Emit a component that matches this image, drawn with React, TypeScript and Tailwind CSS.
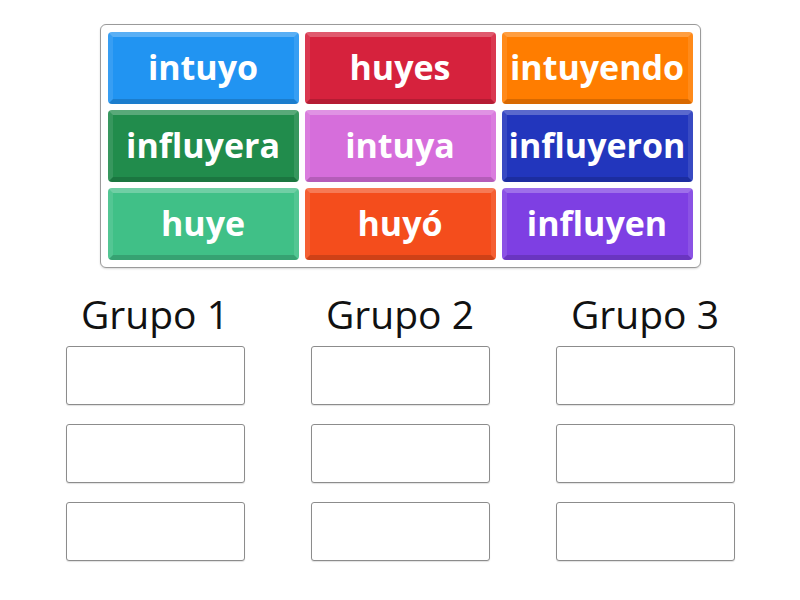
const tiles = [
  { word: "intuyo", bg: "bg-[#2194f2]" },
  { word: "huyes", bg: "bg-[#d6223d]" },
  { word: "intuyendo", bg: "bg-[#ff7d00]" },
  { word: "influyera", bg: "bg-[#218c4c]" },
  { word: "intuya", bg: "bg-[#d66edb]" },
  { word: "influyeron", bg: "bg-[#2236bd]" },
  { word: "huye", bg: "bg-[#40c087]" },
  { word: "huyó", bg: "bg-[#f44d1c]" },
  { word: "influyen", bg: "bg-[#7e3fe3]" },
];

const groups = ["Grupo 1", "Grupo 2", "Grupo 3"];

const App = () => {
  return (
    <div className="min-h-[600px] bg-white pt-[24px] font-['Open_Sans',sans-serif]">
      <div className="mx-auto grid w-[601px] grid-cols-3 gap-[6px] rounded-[6px] border border-[#9a9a9a] bg-white p-[7px] shadow-[0_1px_2px_rgba(0,0,0,0.15)]">
        {tiles.map((t) => (
          <div
            key={t.word}
            className={`${t.bg} flex h-[72px] items-center justify-center rounded-[4px] border-[5px] border-t-white/25 border-x-white/10 border-b-black/15 text-[34px] font-bold leading-none text-white`}
          >
            <span className="-mt-[3px]">{t.word}</span>
          </div>
        ))}
      </div>
      <div className="mx-auto mt-[23px] grid w-[669px] grid-cols-3 gap-x-[66px]">
        {groups.map((g) => (
          <div key={g} className="flex flex-col items-center">
            <div className="h-[55px] text-[39px] leading-[46px] text-[#111]">{g}</div>
            <div className="flex w-full flex-col gap-[19px]">
              <div className="h-[59px] rounded-[3px] border border-[#8c8c8c] bg-white shadow-[0_1px_1px_rgba(0,0,0,0.12)]" />
              <div className="h-[59px] rounded-[3px] border border-[#8c8c8c] bg-white shadow-[0_1px_1px_rgba(0,0,0,0.12)]" />
              <div className="h-[59px] rounded-[3px] border border-[#8c8c8c] bg-white shadow-[0_1px_1px_rgba(0,0,0,0.12)]" />
            </div>
          </div>
        ))}
      </div>
    </div>
  );
};

export default App;
